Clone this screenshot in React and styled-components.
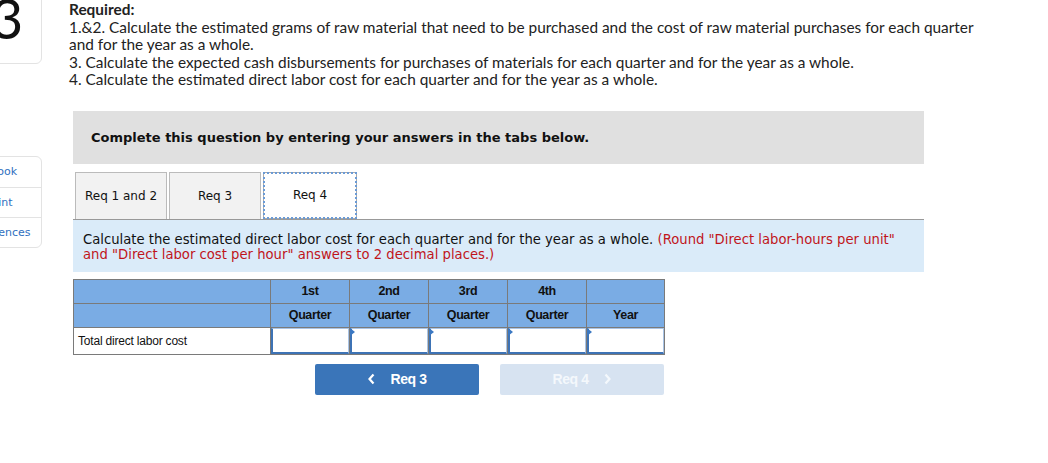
import React from "react";
import styled, { createGlobalStyle } from "styled-components";

const Global = createGlobalStyle`
  html, body { margin: 0; padding: 0; background: #fff; }
  body { overflow: hidden; width: 1048px; height: 463px; }
`;

const Page = styled.div`
  display: flex;
  align-items: flex-start;
  gap: 27px;
`;

const Sidebar = styled.div`
  margin-left: -42px;
  width: 84px;
  flex: none;
  display: flex;
  flex-direction: column;
  gap: 92px;
  margin-top: -20px;
`;

const Card = styled.div`
  border: 1px solid #e3e3e3;
  border-radius: 6px;
  background: #fff;
  display: flex;
  flex-direction: column;
`;

const BigNumber = styled.div`
  height: 82px;
  font-family: "Lato", "Liberation Sans", sans-serif;
  font-size: 56px;
  line-height: 62px;
  padding-top: 6px;
  color: #111;
  text-align: center;
  padding-left: 14px;
  box-sizing: border-box;
`;

const SideLink = styled.a`
  display: block;
  height: 29px;
  line-height: 29px;
  text-align: center;
  font-family: "DejaVu Sans", Verdana, sans-serif;
  font-size: 11px;
  color: #2f6fc0;
  & + & { border-top: 1px solid #e3e3e3; }
  &:first-child { height: 30px; line-height: 30px; }
`;

const Main = styled.div`
  flex: none;
  width: 930px;
  margin-top: 1px;
`;

const Intro = styled.div`
  width: 920px;
  font-family: "Lato", "Liberation Sans", sans-serif;
  font-size: 15.4px;
  line-height: 17.6px;
  color: #222;
  h4 { margin: 0; font-size: 15.4px; font-weight: 700; }
  p { margin: 0; }
`;

const Question = styled.div`
  margin: 22px 0 0 4px;
  width: 851px;
`;

const Banner = styled.div`
  background: #e0e0e0;
  height: 53px;
  padding-left: 18px;
  display: flex;
  align-items: center;
  font-family: "DejaVu Sans", Verdana, sans-serif;
  font-size: 13px;
  font-weight: 700;
  color: #111;
  box-sizing: border-box;
`;

const Tabs = styled.div`
  margin-top: 8px;
  display: flex;
  gap: 2px;
  padding-left: 2px;
  border-bottom: 1px solid #999;
`;

const Tab = styled.div`
  width: ${(p) => (p.$active ? 94 : 92)}px;
  height: 47px;
  box-sizing: border-box;
  display: flex;
  align-items: center;
  justify-content: center;
  font-family: "DejaVu Sans", Verdana, sans-serif;
  font-size: 12px;
  color: #111;
  background: ${(p) => (p.$active ? "#fff" : "#f2f2f2")};
  border: 1px solid #bbb;
  border-bottom: none;
  ${(p) => p.$active && "border: 1px solid #aaa; outline: 2px dotted #6b9bd6; outline-offset: -2px;"}
`;

const Info = styled.div`
  background: #daebf9;
  padding: 12px 16px 10px 10px;
  font-family: "DejaVu Sans", Verdana, sans-serif;
  font-size: 13.2px;
  line-height: 15px;
  color: #111;
  span { color: #c0151b; }
`;

const Table = styled.table`
  margin-top: 7px;
  border-collapse: collapse;
  width: 591px;
  font-family: "Liberation Sans", Arial, sans-serif;
  table-layout: fixed;
`;

const Th = styled.th`
  background: #7aace4;
  border: 1px solid #7a7a7a;
  height: 23px;
  padding: 0;
  font-size: 12.5px;
  font-weight: 700;
  letter-spacing: -0.4px;
  color: #111;
  text-align: center;
`;

const Label = styled.td`
  border: 1px solid #7a7a7a;
  height: 26px;
  padding: 0 4px;
  font-size: 12px;
  letter-spacing: -0.2px;
  color: #111;
`;

const InputCell = styled.td`
  border: 1px solid #7a7a7a;
  padding: 0;
  position: relative;
  &::before {
    content: "";
    display: ${(p) => (p.$flag ? "block" : "none")};
    position: absolute;
    left: 0;
    top: 0;
    border-top: 4px solid transparent;
    border-bottom: 4px solid transparent;
    border-left: 5px solid #3b78c2;
  }
`;

const Field = styled.input`
  display: block;
  width: 100%;
  height: 26px;
  box-sizing: border-box;
  border: 1px solid #a9c4e6;
  border-left: 2px solid #3d73b5;
  border-bottom: 2px solid #3d73b5;
  background: #fff;
  outline: none;
`;

const Nav = styled.div`
  width: 591px;
  margin-top: 9px;
  display: flex;
  justify-content: flex-end;
  gap: 21px;
`;

const NavButton = styled.button`
  width: 164px;
  height: 31px;
  border: none;
  border-radius: 2px;
  background: ${(p) => (p.$disabled ? "#d7e3f1" : "#3a75b9")};
  color: ${(p) => (p.$disabled ? "#f4f8fc" : "#fff")};
  font-family: "Liberation Sans", Arial, sans-serif;
  font-size: 14px;
  font-weight: 700;
  letter-spacing: -0.4px;
  display: flex;
  align-items: center;
  justify-content: center;
  gap: 14px;
  padding: 0;
  svg { width: 9px; height: 12px; }
`;

const Chevron = ({ dir }) => (
  <svg viewBox="0 0 9 12">
    <path
      d={dir === "left" ? "M6.5 1.5 L2.5 6 L6.5 10.5" : "M2.5 1.5 L6.5 6 L2.5 10.5"}
      fill="none"
      stroke="currentColor"
      strokeWidth="2.2"
    />
  </svg>
);

export default function App() {
  const cols = [
    ["1st", "Quarter"],
    ["2nd", "Quarter"],
    ["3rd", "Quarter"],
    ["4th", "Quarter"],
    ["", "Year"],
  ];
  return (
    <>
      <Global />
      <Page>
        <Sidebar>
          <Card>
            <BigNumber>3</BigNumber>
          </Card>
          <Card>
            <SideLink>eBook</SideLink>
            <SideLink>Print</SideLink>
            <SideLink>References</SideLink>
          </Card>
        </Sidebar>
        <Main>
          <Intro>
            <h4>Required:</h4>
            <p>
              1.&amp;2. Calculate the estimated grams of raw material that need to be purchased and the cost of raw
              material purchases for each quarter and for the year as a whole.
            </p>
            <p>3. Calculate the expected cash disbursements for purchases of materials for each quarter and for the year as a whole.</p>
            <p>4. Calculate the estimated direct labor cost for each quarter and for the year as a whole.</p>
          </Intro>
          <Question>
            <Banner>Complete this question by entering your answers in the tabs below.</Banner>
            <Tabs>
              <Tab>Req 1 and 2</Tab>
              <Tab>Req 3</Tab>
              <Tab $active>Req 4</Tab>
            </Tabs>
            <Info>
              Calculate the estimated direct labor cost for each quarter and for the year as a whole.{" "}
              <span>(Round "Direct labor-hours per unit" and "Direct labor cost per hour" answers to 2 decimal places.)</span>
            </Info>
            <Table>
              <colgroup>
                <col style={{ width: 197 }} />
                <col style={{ width: 79 }} />
                <col style={{ width: 79 }} />
                <col style={{ width: 79 }} />
                <col style={{ width: 79 }} />
                <col style={{ width: 78 }} />
              </colgroup>
              <thead>
                <tr>
                  <Th />
                  {cols.map((c, i) => (
                    <Th key={i}>{c[0]}</Th>
                  ))}
                </tr>
                <tr>
                  <Th />
                  {cols.map((c, i) => (
                    <Th key={i}>{c[1]}</Th>
                  ))}
                </tr>
              </thead>
              <tbody>
                <tr>
                  <Label>Total direct labor cost</Label>
                  {cols.map((c, i) => (
                    <InputCell key={i} $flag={i > 0}>
                      <Field />
                    </InputCell>
                  ))}
                </tr>
              </tbody>
            </Table>
            <Nav>
              <NavButton>
                <Chevron dir="left" />
                Req 3
              </NavButton>
              <NavButton $disabled>
                Req 4
                <Chevron dir="right" />
              </NavButton>
            </Nav>
          </Question>
        </Main>
      </Page>
    </>
  );
}
